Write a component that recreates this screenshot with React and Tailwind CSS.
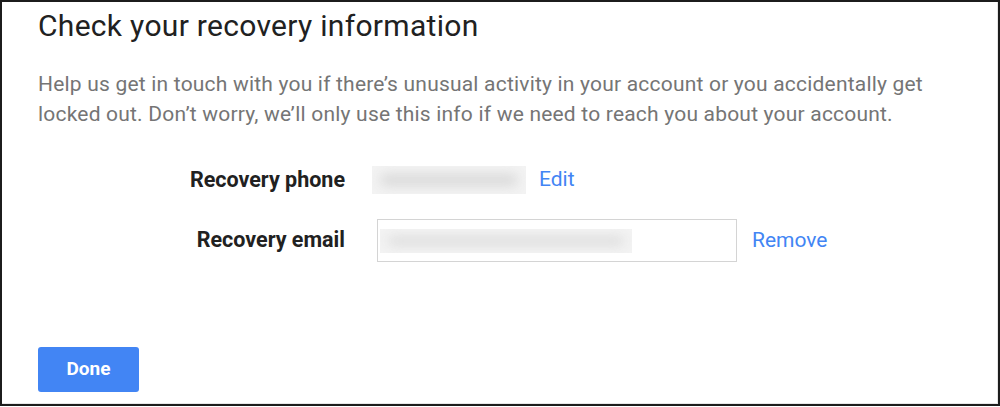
import React from 'react';

const Blur = ({ className }) => (
  <div className={`relative overflow-hidden ${className}`}>
    <div className="absolute inset-x-2 inset-y-2 rounded-full bg-[#d9d9d9] blur-[6px]" />
  </div>
);

const RecoveryInfo = () => {
  return (
    <div className="w-[1000px] h-[407px] bg-white font-['Roboto',sans-serif]">
      <div className="h-[406px] border-2 border-[#1c1c1c]">
        <div className="h-full border-r border-b border-[#e6e6e6] pl-9 pt-[6px]">
          <h1 className="text-[30px] leading-[36px] tracking-[0.3px] text-[#212121]">Check your recovery information</h1>

          <p className="mt-[25px] text-[21px] leading-[30px] tracking-[0.2px] text-[#757575] w-[900px]">
            Help us get in touch with you if there’s unusual activity in your account or you accidentally get
            locked out. Don’t worry, we’ll only use this info if we need to reach you about your account.
          </p>

          {/* recovery fields */}
          <div className="mt-[37px] flex flex-col gap-[25px]">
            <div className="flex items-center h-[28px]">
              <span className="w-[307px] text-right text-[21.5px] font-bold text-[#212121]">Recovery phone</span>
              <Blur className="ml-[27px] w-[154px] h-[28px] bg-[#f3f3f3]" />
              <a className="ml-[13px] text-[21px] text-[#4285f4]">Edit</a>
            </div>
            <div className="flex items-center h-[43px]">
              <span className="w-[307px] text-right text-[21.5px] font-bold text-[#212121]">Recovery email</span>
              <div className="ml-[32px] w-[360px] h-[43px] border border-[#d4d4d4] flex items-center px-[2px]">
                <Blur className="w-[252px] h-[24px] bg-[#f3f3f3]" />
              </div>
              <a className="ml-[15px] text-[21px] text-[#4285f4]">Remove</a>
            </div>
          </div>

          <button className="mt-[85px] w-[101px] h-[45px] rounded-[3px] bg-[#4285f4] text-white text-[19px] font-bold">
            Done
          </button>
        </div>
      </div>
    </div>
  );
};

export default function App() {
  return <RecoveryInfo />;
}
